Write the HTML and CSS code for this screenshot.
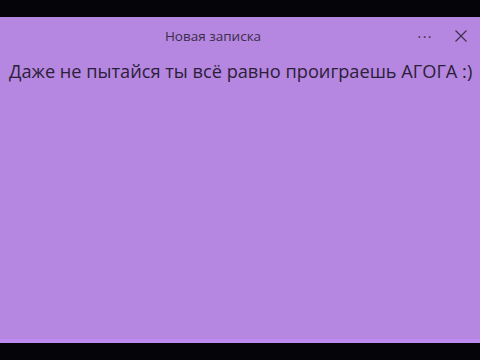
FILE: index.html
```html
<!DOCTYPE html>
<html lang="ru">
<head>
    <meta charset="UTF-8">
    <meta name="viewport" content="width=device-width, initial-scale=1.0">
    <title>Новая записка</title>
    <link rel="stylesheet" href="styles.css">
</head>
<body>
    <div class="note-window">
        <div class="title-bar">
            <span class="title">Новая записка</span>
            <div class="controls">
                <span class="more">···</span>
                <svg class="close" width="12" height="12" viewBox="0 0 12 12">
                    <path d="M0.5 0.5 L11.5 11.5 M11.5 0.5 L0.5 11.5" stroke="#3b2d4a" stroke-width="1.1" fill="none"/>
                </svg>
            </div>
        </div>
        <div class="note-body">
            <p class="note-text">Даже не пытайся ты всё равно проиграешь АГОГА :)</p>
        </div>
    </div>
</body>
</html>
```

FILE: styles.css
```css
* {
    margin: 0;
    padding: 0;
    box-sizing: border-box;
}

body {
    font-family: "Open Sans", "Noto Sans", sans-serif;
    background-color: #050408;
    width: 480px;
    height: 360px;
    overflow: hidden;
    padding-top: 17px;
}

.note-window {
    background-color: #b587e0;
    height: 326px;
    border-bottom: 4px solid #bd8bee;
    display: flex;
    flex-direction: column;
}

.title-bar {
    height: 38px;
    display: flex;
    align-items: center;
    justify-content: center;
    position: relative;
}

.title {
    font-size: 13.5px;
    color: #3b2d4a;
    margin-left: -54px;
}

.controls {
    position: absolute;
    right: 13px;
    top: 0;
    height: 38px;
    display: flex;
    align-items: center;
    gap: 22px;
}

.more {
    font-size: 14px;
    color: #3b2d4a;
    letter-spacing: 1.5px;
}

.note-body {
    padding: 4px 9px;
}

.note-text {
    font-size: 18.2px;
    color: #2c2038;
    white-space: nowrap;
}
```
